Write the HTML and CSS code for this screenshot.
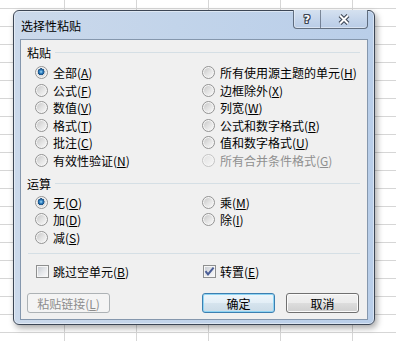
FILE: index.html
```html
<!DOCTYPE html>
<html lang="zh-CN">
<head>
<meta charset="utf-8">
<title>选择性粘贴</title>
<link rel="stylesheet" href="styles.css">
</head>
<body>
<div class="dialog">
  <div class="titlebar">
    <span class="title">选择性粘贴</span>
    <div class="caption">
      <div class="cbtn help"><span class="qmark">?</span></div>
      <div class="cbtn close">
        <svg width="12" height="11" viewBox="0 0 12 11">
          <path d="M2 1.5 L10 9.5 M10 1.5 L2 9.5" stroke="#3a4352" stroke-width="4" fill="none"/>
          <path d="M2 1.5 L10 9.5 M10 1.5 L2 9.5" stroke="#ffffff" stroke-width="2" fill="none"/>
        </svg>
      </div>
    </div>
  </div>
  <div class="client">
    <div class="ghead"><span>粘贴</span><i class="rule"></i></div>
    <div class="opts paste">
      <label class="opt"><span class="radio on"></span><span class="txt">全部(<u>A</u>)</span></label>
      <label class="opt"><span class="radio"></span><span class="txt">所有使用源主题的单元(<u>H</u>)</span></label>
      <label class="opt"><span class="radio"></span><span class="txt">公式(<u>F</u>)</span></label>
      <label class="opt"><span class="radio"></span><span class="txt">边框除外(<u>X</u>)</span></label>
      <label class="opt"><span class="radio"></span><span class="txt">数值(<u>V</u>)</span></label>
      <label class="opt"><span class="radio"></span><span class="txt">列宽(<u>W</u>)</span></label>
      <label class="opt"><span class="radio"></span><span class="txt">格式(<u>T</u>)</span></label>
      <label class="opt"><span class="radio"></span><span class="txt">公式和数字格式(<u>R</u>)</span></label>
      <label class="opt"><span class="radio"></span><span class="txt">批注(<u>C</u>)</span></label>
      <label class="opt"><span class="radio"></span><span class="txt">值和数字格式(<u>U</u>)</span></label>
      <label class="opt"><span class="radio"></span><span class="txt">有效性验证(<u>N</u>)</span></label>
      <label class="opt disabled"><span class="radio"></span><span class="txt">所有合并条件格式(<u>G</u>)</span></label>
    </div>
    <div class="ghead ops-head"><span>运算</span><i class="rule"></i></div>
    <div class="opts ops">
      <label class="opt"><span class="radio on"></span><span class="txt">无(<u>O</u>)</span></label>
      <label class="opt"><span class="radio"></span><span class="txt">乘(<u>M</u>)</span></label>
      <label class="opt"><span class="radio"></span><span class="txt">加(<u>D</u>)</span></label>
      <label class="opt"><span class="radio"></span><span class="txt">除(<u>I</u>)</span></label>
      <label class="opt"><span class="radio"></span><span class="txt">减(<u>S</u>)</span></label>
    </div>
    <div class="sep"></div>
    <div class="opts checks">
      <label class="opt cb"><span class="check"></span><span class="txt">跳过空单元(<u>B</u>)</span></label>
      <label class="opt cb"><span class="check"><svg width="11" height="11" viewBox="0 0 11 11"><path d="M1.5 5.2 L4 8.3 L9.6 1.6" stroke="#4a5d96" stroke-width="2" fill="none"/></svg></span><span class="txt">转置(<u>E</u>)</span></label>
    </div>
    <div class="btnrow">
      <div class="btn link"><span class="txt">粘贴链接(<u>L</u>)</span></div>
      <div class="btn ok">确定</div>
      <div class="btn cancel">取消</div>
    </div>
  </div>
</div>
</body>
</html>
```
FILE: styles.css
```css
html, body {
  margin: 0;
}
body {
  box-sizing: border-box;
  width: 396px;
  height: 341px;
  overflow: hidden;
  padding: 10px 0 0 13px;
  background-color: #ffffff;
  background-image:
    linear-gradient(to right, #d6d6d6 1px, transparent 1px),
    linear-gradient(to bottom, #d6d6d6 1px, transparent 1px);
  background-size: 72px 100%, 100% 18px;
  background-position: 64px 0, 0 8px;
  font-family: "Noto Sans CJK SC", "Noto Sans", sans-serif;
  font-size: 12px;
  color: #000;
}

.dialog {
  box-sizing: border-box;
  width: 362px;
  height: 315px;
  border: 1px solid #3c4655;
  border-radius: 6px;
  padding: 0 6px 4px 6px;
  display: flex;
  flex-direction: column;
  background: linear-gradient(to right, #cbd9eb 0%, #c2d4ea 45%, #b9cee9 100%);
  box-shadow: inset 0 0 0 1px rgba(255,255,255,0.45), 2px 3px 6px rgba(0,0,0,0.35);
}

.titlebar {
  height: 28px;
  flex: none;
  display: flex;
  align-items: center;
  padding-left: 1px;
}
.title {
  font-size: 12px;
  color: #000;
}

.caption {
  margin-left: auto;
  align-self: flex-start;
  margin-top: -1px;
  height: 19px;
  box-sizing: border-box;
  display: flex;
  border: 1px solid rgba(52,64,82,0.7);
  border-top: none;
  border-radius: 0 0 4px 4px;
  overflow: hidden;
  background: linear-gradient(#d5e1f0, #c6d6eb 50%, #b9cce6);
  box-shadow: inset 0 -1px 0 rgba(255,255,255,0.45), inset 1px 0 0 rgba(255,255,255,0.35);
}
.cbtn {
  display: flex;
  align-items: center;
  justify-content: center;
}
.cbtn.help {
  width: 26px;
}
.cbtn.close {
  width: 46px;
  border-left: 1px solid rgba(52,64,82,0.55);
}
.qmark {
  font-family: "DejaVu Sans", sans-serif;
  font-weight: bold;
  font-size: 11px;
  line-height: 11px;
  color: #fff;
  text-shadow: -1px 0 0 #3a4352, 1px 0 0 #3a4352, 0 -1px 0 #3a4352, 0 1px 0 #3a4352,
    -1px -1px 0 #3a4352, 1px 1px 0 #3a4352, -1px 1px 0 #3a4352, 1px -1px 0 #3a4352;
}

.client {
  box-sizing: border-box;
  height: 281px;
  flex: none;
  border: 1px solid #8597ad;
  background: #f0f0f0;
  padding: 0 7px 0 6px;
  display: flex;
  flex-direction: column;
}

.ghead {
  display: flex;
  align-items: center;
  height: 14px;
  margin-top: 5px;
  gap: 4px;
}
.ghead.ops-head {
  margin-top: 8px;
}
.rule {
  flex: 1;
  height: 1px;
  background: #d5dfe5;
}

.opts {
  display: grid;
  grid-template-columns: 167px 1fr;
  grid-auto-rows: 17.5px;
  padding-left: 8px;
}
.opts.paste {
  margin-top: 4.75px;
}
.opts.ops {
  margin-top: 2.5px;
}
.opts.checks {
  margin-top: 8.5px;
}
.sep {
  height: 1px;
  background: #d5dfe5;
  margin: 7.5px 0 0 1px;
  flex: none;
}

.opt {
  display: flex;
  align-items: center;
  gap: 5px;
  white-space: nowrap;
}
.txt {
  white-space: nowrap;
}
.txt u {
  text-decoration: underline;
  text-underline-offset: 1px;
  text-decoration-thickness: 1px;
}
.opt.disabled {
  color: #8f8f8f;
}
.opt.cb {
  gap: 4px;
}

.radio {
  box-sizing: border-box;
  width: 13px;
  height: 13px;
  flex: none;
  border-radius: 50%;
  border: 1px solid #939393;
  background: #f5f5f5;
  display: flex;
  align-items: center;
  justify-content: center;
}
.radio::before {
  content: "";
  width: 9px;
  height: 9px;
  border-radius: 50%;
  background: linear-gradient(135deg, #c9c9c9 0%, #e2e2e2 50%, #f7f7f7 100%);
}
.radio.on::before {
  background: radial-gradient(circle at 45% 42%, #a6def9 0px, #3484c4 1.6px, #14477a 3.3px, #dcdcdc 3.6px, #e8e8e8 100%);
}
.disabled .radio {
  border-color: #c4c4c4;
}
.disabled .radio::before {
  background: linear-gradient(135deg, #e2e2e2, #f6f6f6);
}

.check {
  box-sizing: border-box;
  width: 13px;
  height: 13px;
  flex: none;
  margin-left: 1px;
  border: 1px solid #8e8f8f;
  padding: 1px;
  background: linear-gradient(135deg, #c8ccd3 0%, #e4e6e9 50%, #f8f8f9 100%) content-box, #f6f6f6;
  display: flex;
}
.check svg {
  margin: -1px;
  flex: none;
}

.btnrow {
  display: flex;
  margin-top: 12.75px;
  height: 20px;
}
.btn {
  box-sizing: border-box;
  height: 20px;
  width: 73px;
  border: 1px solid #707070;
  border-radius: 3px;
  display: flex;
  align-items: center;
  justify-content: center;
  background: linear-gradient(#f2f2f2 0%, #ebebeb 50%, #dddddd 51%, #cfcfcf 100%);
  box-shadow: inset 0 0 0 1px #fbfbfb;
  white-space: nowrap;
}
.btn.link {
  width: 83px;
  border-color: #adb2b5;
  background: #f4f4f4;
  color: #8d8d8d;
  box-shadow: none;
}
.btn.ok {
  margin-left: auto;
  border-color: #3c7fb1;
  background: linear-gradient(#eef6fb 0%, #e3eef6 50%, #d6e4ee 51%, #cbdbe7 100%);
  box-shadow: inset 0 0 0 1px #8fd4f3;
}
.btn.cancel {
  margin-left: 11px;
  margin-right: 1px;
}
```
